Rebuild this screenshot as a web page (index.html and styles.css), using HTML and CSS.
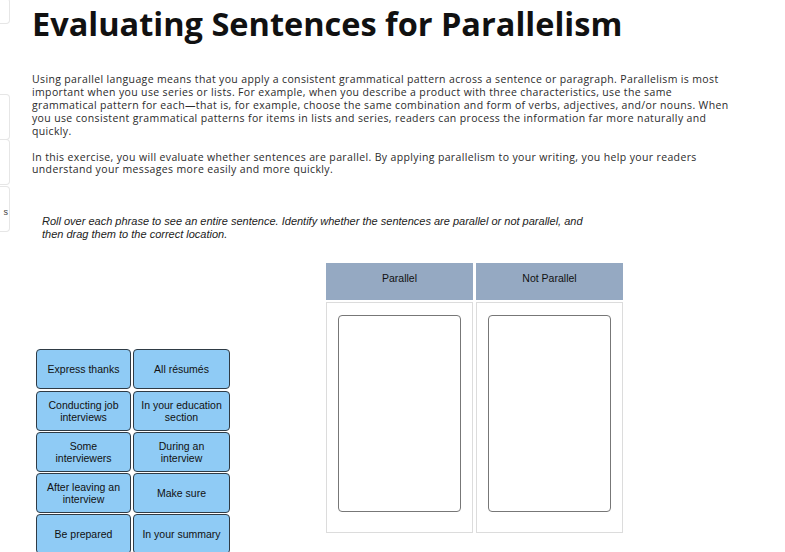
FILE: index.html
```html
<!DOCTYPE html>
<html>
<head>
<meta charset="utf-8">
<link rel="stylesheet" href="styles.css">
</head>
<body>
<div class="side">
  <div class="stub s1"></div>
  <div class="stub s2"></div>
  <div class="stub s3"></div>
  <div class="stub s4"><span>s</span></div>
</div>
<main class="main">
  <h1 class="title">Evaluating Sentences for Parallelism</h1>
  <p class="intro">Using parallel language means that you apply a consistent grammatical pattern across a sentence or paragraph. Parallelism is most important when you use series or lists. For example, when you describe a product with three characteristics, use the same grammatical pattern for each—that is, for example, choose the same combination and form of verbs, adjectives, and/or nouns. When you use consistent grammatical patterns for items in lists and series, readers can process the information far more naturally and quickly.</p>
  <p class="intro">In this exercise, you will evaluate whether sentences are parallel. By applying parallelism to your writing, you help your readers understand your messages more easily and more quickly.</p>
  <p class="instr">Roll over each phrase to see an entire sentence. Identify whether the sentences are parallel or not parallel, and then drag them to the correct location.</p>
  <div class="activity">
    <div class="tiles">
      <div class="tile">Express thanks</div>
      <div class="tile">All résumés</div>
      <div class="tile">Conducting job interviews</div>
      <div class="tile">In your education section</div>
      <div class="tile">Some interviewers</div>
      <div class="tile">During an interview</div>
      <div class="tile">After leaving an interview</div>
      <div class="tile">Make sure</div>
      <div class="tile">Be prepared</div>
      <div class="tile">In your summary</div>
    </div>
    <div class="board">
      <div class="col">
        <div class="head">Parallel</div>
        <div class="cell"><div class="drop"></div></div>
      </div>
      <div class="col">
        <div class="head">Not Parallel</div>
        <div class="cell"><div class="drop"></div></div>
      </div>
    </div>
  </div>
</main>
</body>
</html>
```
FILE: styles.css
```css
html, body { margin: 0; padding: 0; background: #fff; }
body { display: flex; width: 785px; height: 552px; overflow: hidden; }
.side { width: 10px; flex: none; display: flex; flex-direction: column; }
.stub { border: 1px solid #e6e6e6; border-left: none; border-radius: 0 4px 4px 0; box-sizing: border-box; }
.s1 { height: 26px; margin-top: -2px; }
.s2 { height: 46px; margin-top: 70px; }
.s3 { height: 46px; margin-top: -1px; }
.s4 { height: 46px; margin-top: 1px; position: relative; }
.s4 span { position: absolute; right: 1px; top: 20px; font: 9px "Liberation Sans", sans-serif; color: #444; }
.main { margin-left: 22px; flex: 1; }
.title { font-family: "Open Sans", sans-serif; font-weight: 700; font-size: 32.5px; color: #111; margin: 4px 0 0 0; line-height: 40px; letter-spacing: 0; }
.intro { font-family: "Open Sans", sans-serif; font-size: 10.5px; line-height: 12.9px; color: #2b2b2b; margin: 29px 0 0 0; width: 697px; letter-spacing: 0.36px; }
.intro + .intro { margin-top: 13px; }
.instr { font-family: "Liberation Sans", sans-serif; font-style: italic; font-size: 11px; line-height: 12.5px; color: #222; margin: 39px 0 0 10px; width: 556px; }
.activity { display: flex; margin-top: 23px; }
.tiles { display: grid; grid-template-columns: 95px 97px; grid-auto-rows: 40px; gap: 1.25px 2px; margin: 86px 0 0 4px; align-self: flex-start; }
.tile { background: #8fcbf5; border: 1px solid #2f3b45; border-radius: 4px; box-sizing: border-box; display: flex; align-items: center; justify-content: center; text-align: center; font: 10.5px/12px "Liberation Sans", sans-serif; color: #111; padding: 0 4px; height: 40px; }
.board { display: flex; gap: 3px; margin-left: 96px; }
.col { width: 147px; display: flex; flex-direction: column; gap: 2px; }
.head { background: #95a9c2; height: 37px; display: flex; align-items: center; justify-content: center; font: 10.5px "Liberation Sans", sans-serif; color: #111; padding-bottom: 8px; box-sizing: border-box; }
.cell { border: 1px solid #dcdcdc; height: 231px; box-sizing: border-box; padding: 12px 11px; }
.drop { border: 1px solid #777; border-radius: 4px; height: 197px; box-sizing: border-box; }
```
